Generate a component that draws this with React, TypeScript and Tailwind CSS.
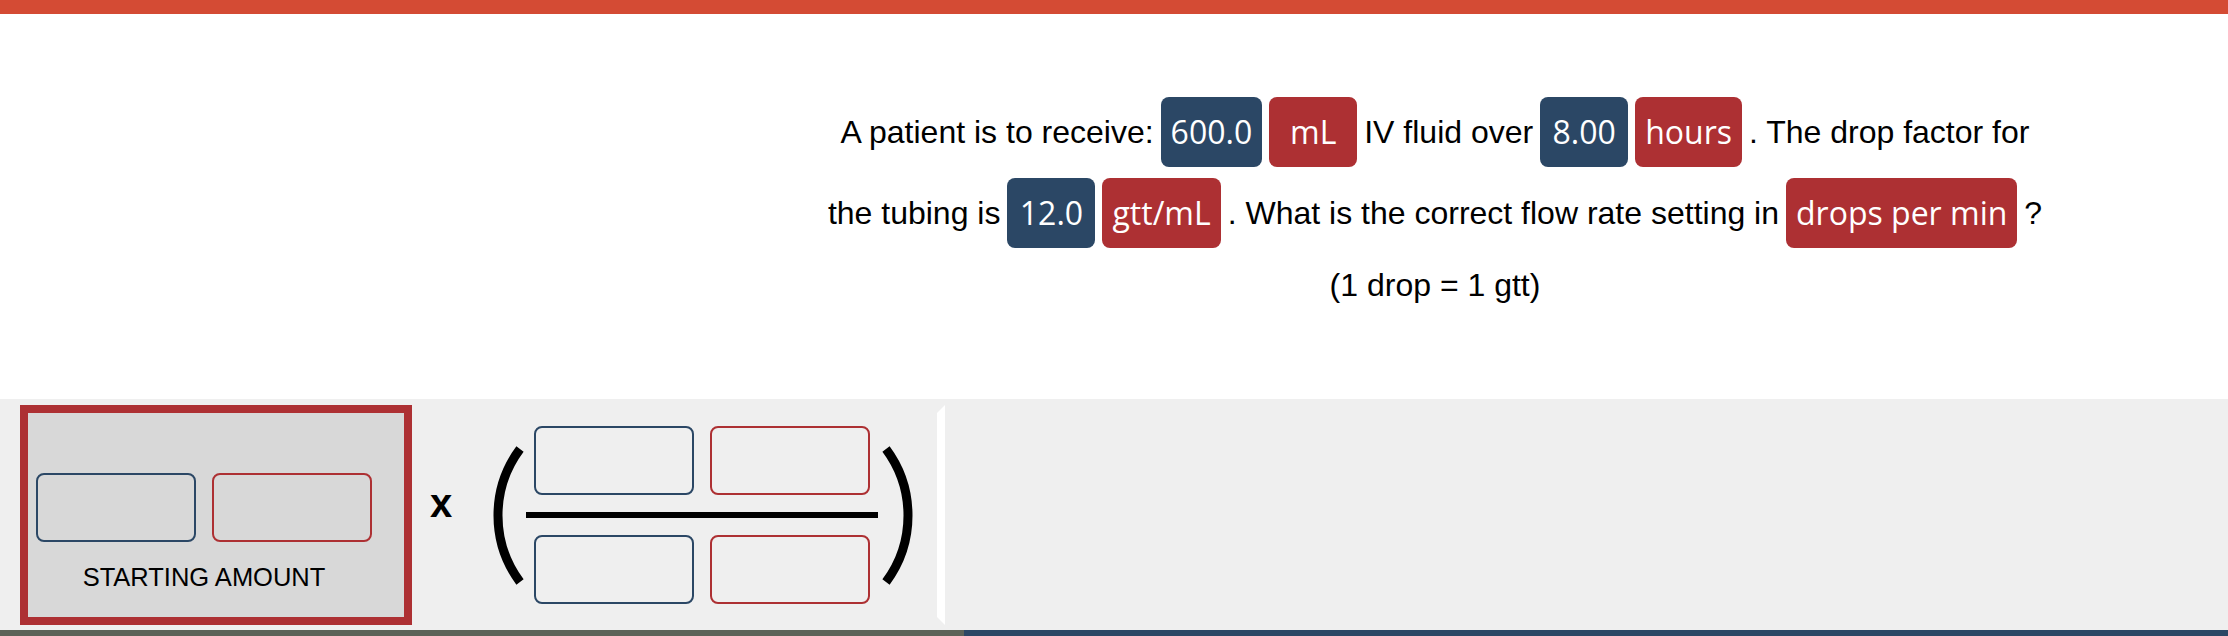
import React from "react";

const sans = "font-['Liberation_Sans',Arial,Helvetica,sans-serif]";

function Badge({ children, color }: { children: React.ReactNode; color: "navy" | "red" }) {
  return (
    <span
      className={
        "inline-flex h-[70px] min-w-[88px] items-center justify-center rounded-[8px] px-[10px] font-['Open_Sans','Noto_Sans',sans-serif] text-[32px] leading-none text-white " +
        (color === "navy" ? "bg-[#2b4765]" : "bg-[#ad3033]")
      }
    >
      {children}
    </span>
  );
}

function Slot({ color }: { color: "navy" | "red" }) {
  return (
    <div
      className={
        "h-[69px] w-[160px] rounded-[8px] border-2 " +
        (color === "navy" ? "border-[#2b4765]" : "border-[#ad3033]")
      }
    />
  );
}

function Paren({ right }: { right?: boolean }) {
  return (
    <svg width="34" height="140" viewBox="0 0 34 140" className="shrink-0">
      {right ? (
        <path d="M6 4 A111.5 111.5 0 0 1 6 137" fill="none" stroke="#000" strokeWidth="9" strokeLinecap="butt" />
      ) : (
        <path d="M28 4 A111.5 111.5 0 0 0 28 137" fill="none" stroke="#000" strokeWidth="9" strokeLinecap="butt" />
      )}
    </svg>
  );
}

export default function App() {
  return (
    <div className={"w-[2228px] h-[636px] overflow-hidden bg-white text-black " + sans}>
      <div className="h-[14px] bg-[#d44b34]" />

      <div className="h-[385px] pl-[642px] pt-[83px] flex flex-col items-center text-[32px] leading-none">
        <div className="flex h-[70px] items-center gap-[7px] whitespace-nowrap">
          <span>A patient is to receive:</span>
          <Badge color="navy">600.0</Badge>
          <Badge color="red">mL</Badge>
          <span>IV fluid over</span>
          <Badge color="navy">8.00</Badge>
          <Badge color="red">hours</Badge>
          <span>. The drop factor for</span>
        </div>
        <div className="mt-[11px] flex h-[70px] items-center gap-[7px] whitespace-nowrap">
          <span>the tubing is</span>
          <Badge color="navy">12.0</Badge>
          <Badge color="red">gtt/mL</Badge>
          <span>. What is the correct flow rate setting in</span>
          <Badge color="red">drops per min</Badge>
          <span>?</span>
        </div>
        <div className="mt-[17px] leading-[40px]">(1 drop = 1 gtt)</div>
      </div>

      <div className="h-[231px] bg-[#efefef] pt-[6px] flex items-start">
        <div className="ml-[20px] h-[220px] w-[392px] border-[8px] border-[#ad3033] bg-[#d8d8d8] pl-[8px] pt-[60px]">
          <div className="flex gap-[16px]">
            <Slot color="navy" />
            <Slot color="red" />
          </div>
          <div className="mt-[20px] w-[336px] text-center text-[25.5px] leading-[30px]">STARTING AMOUNT</div>
        </div>

        <div className="ml-[18px] mt-[78px] text-[40px] font-bold leading-[40px]">x</div>

        <div className="ml-[18px] h-[220px] w-[475px] border-[8px] border-transparent border-r-white flex items-center">
          <div className="ml-[14px]">
            <Paren />
          </div>
          <div className="flex w-[352px] flex-col items-center">
            <div className="flex gap-[16px]">
              <Slot color="navy" />
              <Slot color="red" />
            </div>
            <div className="my-[17px] h-[6px] w-full bg-black" />
            <div className="flex gap-[16px]">
              <Slot color="navy" />
              <Slot color="red" />
            </div>
          </div>
          <div className="ml-[2px]">
            <Paren right />
          </div>
        </div>
      </div>

      <div className="flex h-[6px]">
        <div className="w-[964px] bg-[#5c6358]" />
        <div className="flex-1 bg-[#2b4765]" />
      </div>
    </div>
  );
}
